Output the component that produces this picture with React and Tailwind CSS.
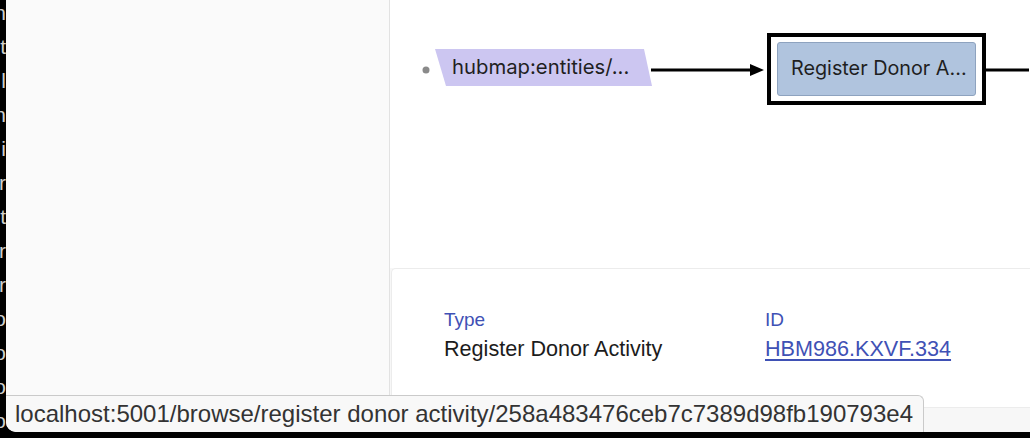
import React from 'react';

const edgeLines = ['n', 't', 'l', 'n', 'i', 'r', 't', 'r', 'r', 'o', 'o', 'o', 'o', 'a'];

function GraphNodes() {
  return (
    <div className="relative h-[268px] w-full">
      <svg className="absolute left-0 top-0" width="639" height="268" viewBox="0 0 639 268">
        <circle cx="36" cy="70" r="3.5" fill="#8a8a8a" />
        <polygon points="45,49 254,49 262,86 56,86" fill="#ccc6f1" />
        <line x1="261" y1="70" x2="364" y2="70" stroke="#000" strokeWidth="3" />
        <polygon points="360,64 374,70 360,76" fill="#000" />
        <line x1="596" y1="70" x2="639" y2="70" stroke="#000" strokeWidth="3" />
      </svg>
      <div
        className="absolute left-[62px] top-[49px] flex h-[37px] items-center text-[20.3px] text-[#1f1f1f]"
        style={{ fontFamily: 'Inter, "Noto Sans", sans-serif' }}
      >
        hubmap:entities/...
      </div>
      <div className="absolute left-[377px] top-[33px] flex h-[72px] w-[219px] items-center justify-center border-[4px] border-black bg-white">
        <div
          className="flex h-[54px] w-[199px] items-center rounded-[3px] border border-[#8ea3bf] bg-[#b0c4de] pl-[13px] text-[19.8px] text-[#1f1f1f]"
          style={{ fontFamily: 'Inter, "Noto Sans", sans-serif' }}
        >
          Register Donor A...
        </div>
      </div>
    </div>
  );
}

export default function App() {
  return (
    <div
      className="relative h-[438px] w-[1030px] overflow-hidden bg-black"
      style={{ fontFamily: '"Liberation Sans", Arial, sans-serif' }}
    >
      <div className="flex h-[432px]">
        {/* clipped edge of the window behind */}
        <div className="w-[6px] overflow-hidden">
          <div className="ml-[-34px] flex w-[40px] flex-col gap-[12px] pt-[2px] text-right text-[21px] leading-[22px] text-[#cfcfcf]">
            {edgeLines.map((c, i) => (
              <span key={i}>{c}</span>
            ))}
          </div>
        </div>

        <div className="w-[384px] rounded-bl-[10px] border-r border-[#e2e2e2] bg-[#fafafa]" />

        <div className="flex flex-1 flex-col bg-white">
          <GraphNodes />
          <div className="flex flex-1 flex-col bg-[#f7f7f7]">
            <div className="ml-px h-[140px] rounded-tl-[5px] border-t border-l border-b border-[#ececec] bg-white pl-[52px] pt-[38px]">
              <div className="grid grid-cols-[321px_1fr]">
                <div className="text-[19px] leading-[26px] text-[#3f51b5]">Type</div>
                <div className="text-[19px] leading-[26px] text-[#3f51b5]">ID</div>
                <div className="text-[21.6px] leading-[32px] text-[#1c1c1c]">Register Donor Activity</div>
                <a href="#" className="justify-self-start text-[21.6px] leading-[32px] text-[#3f51b5] underline underline-offset-[3px]">
                  HBM986.KXVF.334
                </a>
              </div>
            </div>
          </div>
        </div>
      </div>

      {/* status bubble */}
      <div className="absolute bottom-[6px] left-[6px] flex h-[37px] w-[918px] items-center rounded-tr-[6px] rounded-bl-[10px] border-t border-r border-[#cacaca] bg-[#f8f8f8] pl-[9px] text-[24px] text-[#333333]">
        localhost:5001/browse/register donor activity/258a483476ceb7c7389d98fb190793e4
      </div>
    </div>
  );
}
